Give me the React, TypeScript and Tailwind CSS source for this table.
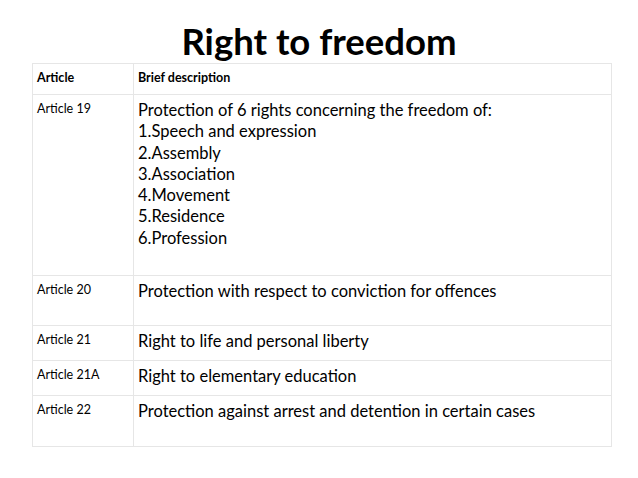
import React from "react";

const rows = [
  {
    article: "Article 19",
    h: "h-[181px]",
    lines: [
      "Protection of 6 rights concerning the freedom of:",
      "1.Speech and expression",
      "2.Assembly",
      "3.Association",
      "4.Movement",
      "5.Residence",
      "6.Profession",
    ],
  },
  { article: "Article 20", h: "h-[50px]", lines: ["Protection with respect to conviction for offences"] },
  { article: "Article 21", h: "h-[35px]", lines: ["Right to life and personal liberty"] },
  { article: "Article 21A", h: "h-[35px]", lines: ["Right to elementary education"] },
  { article: "Article 22", h: "h-[51px]", lines: ["Protection against arrest and detention in certain cases"] },
];

const App = () => {
  return (
    <div className="w-[638px] h-[478px] bg-white text-black font-['Lato',sans-serif] pt-[19px]">
      {/* Title */}
      <h1 className="text-center text-[36.5px] leading-[44px] font-bold">Right to freedom</h1>
      {/* Table */}
      <table className="ml-[32px] w-[579px] border-collapse table-fixed">
        <colgroup>
          <col className="w-[101px]" />
          <col className="w-[478px]" />
        </colgroup>
        <thead>
          <tr className="h-[31px]">
            <th className="border border-[#e6e6e6] text-left align-middle pl-[4px] pb-[1px] text-[12.5px] font-bold">Article</th>
            <th className="border border-[#e6e6e6] text-left align-middle pl-[4px] pb-[1px] text-[12.5px] font-bold">Brief description</th>
          </tr>
        </thead>
        <tbody>
          {rows.map((r) => (
            <tr key={r.article} className={r.h}>
              <td className="border border-[#e6e6e6] align-top pl-[4px] pt-[6px] text-[12.5px] leading-[16px]">{r.article}</td>
              <td className="border border-[#e6e6e6] align-top pl-[4px] pt-[5px] text-[16.5px] leading-[21.3px]">
                {r.lines.map((l) => (
                  <div key={l}>{l}</div>
                ))}
              </td>
            </tr>
          ))}
        </tbody>
      </table>
    </div>
  );
};

export default App;
